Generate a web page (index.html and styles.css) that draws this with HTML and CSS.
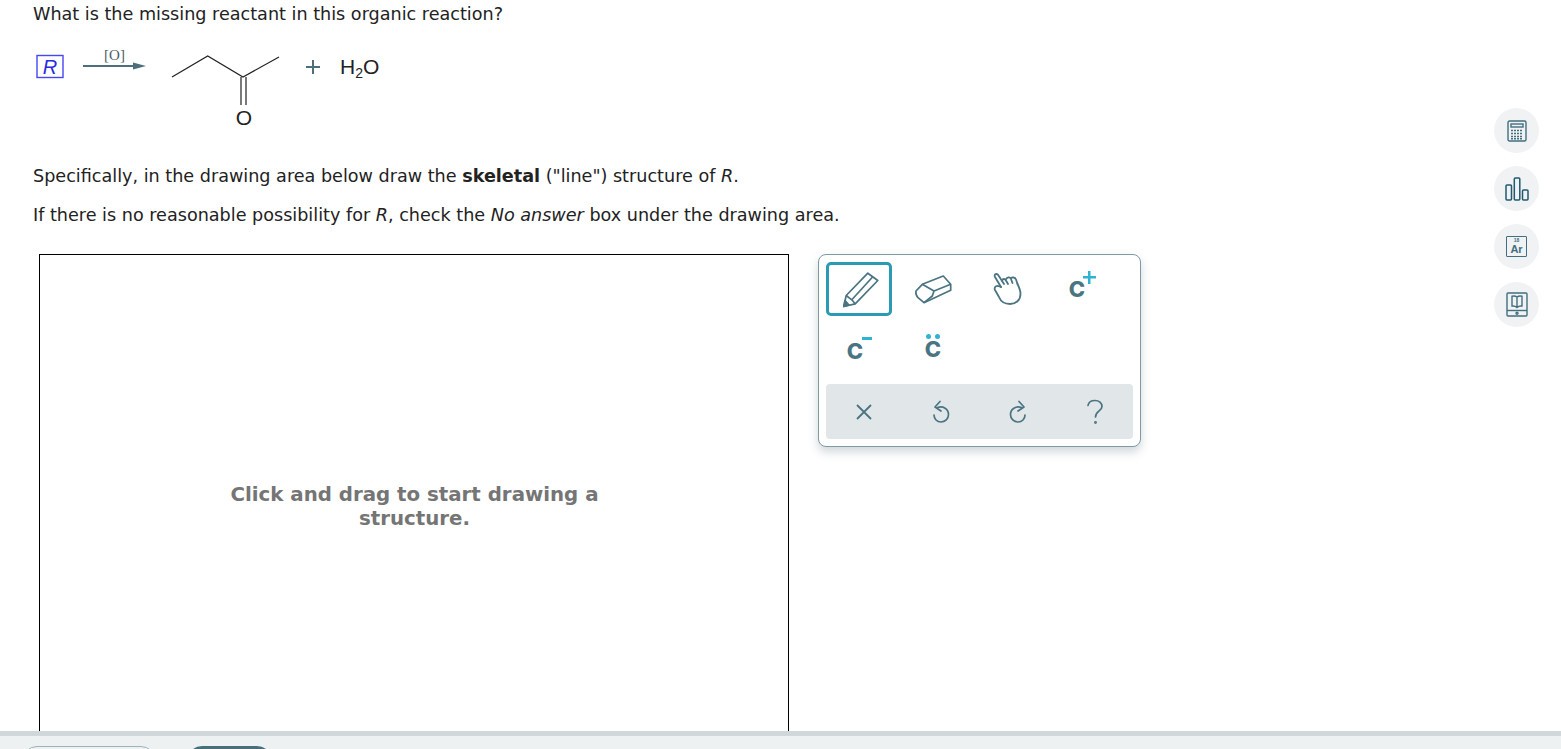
FILE: index.html
```html
<!DOCTYPE html>
<html lang="en">
<head>
  <meta charset="UTF-8">
  <meta name="viewport" content="width=device-width, initial-scale=1.0">
  <title>Organic Reaction Question</title>
  <link rel="stylesheet" href="styles.css">
</head>
<body>
  <div class="main">
    <div class="question">
      <p class="prompt">What is the missing reactant in this organic reaction?</p>

      <svg class="reaction" width="400" height="100" viewBox="0 0 400 100">
        <rect x="4" y="12.500" width="26" height="22" fill="none" stroke="#4646f5" stroke-width="1.400"/>
        <text x="17" y="31" class="r-label" text-anchor="middle">R</text>
        <text x="81.500" y="17" class="oxidant" text-anchor="middle">[O]</text>
        <path d="M50 23H104" stroke="#4d6f7c" stroke-width="2" fill="none"/>
        <path d="M100 19.500L113 23L100 26.500Z" fill="#4d6f7c"/>
        <path d="M139 34L174.700 13L210 34L246 14" stroke="#222" stroke-width="1.200" fill="none"/>
        <path d="M208 34V62M213 34V62" stroke="#222" stroke-width="1.200" fill="none"/>
        <text x="211" y="82" class="atom" text-anchor="middle">O</text>
        <path d="M273 24H287M280 17V31" stroke="#4d6f7c" stroke-width="2" fill="none"/>
        <text x="307" y="31" class="atom">H<tspan class="sub" dy="4">2</tspan><tspan dy="-4">O</tspan></text>
      </svg>

      <p class="instruction first">Specifically, in the drawing area below draw the <b>skeletal</b> ("line") structure of <i>R</i>.</p>
      <p class="instruction">If there is no reasonable possibility for <i>R</i>, check the <i>No answer</i> box under the drawing area.</p>

      <div class="workspace">
        <div class="canvas">
          <p class="canvas-hint">Click and drag to start drawing a structure.</p>
        </div>

        <div class="toolbox">
          <div class="tools">
            <button class="tool selected">
              <svg width="40" height="40" viewBox="0 0 40 40" fill="none" stroke="#4a7482" stroke-width="1.700" stroke-linejoin="round">
                <path d="M4.800 37.500L7.200 26.500L28.800 4.200L38.800 11.500L16.200 34.800Z"/>
                <path d="M7.200 26.500L12.800 30.800L16.200 34.800M12.800 30.800L33.800 7.800"/>
                <path d="M4.800 37.500L6 31.500L10 36Z" fill="#4a7482"/>
              </svg>
            </button>
            <button class="tool">
              <svg width="40" height="32" viewBox="0 0 40 32" fill="none" stroke="#4a7482" stroke-width="1.700" stroke-linejoin="round">
                <path d="M3 18L9.300 11.300L30.300 3L37.700 11.300V17.300L11 29.700L5 24.700C3.500 23 2.500 20 3 18Z"/>
                <path d="M9.300 11.300L21 18L37.700 11.300M21 18L19.300 23L11 29.700"/>
              </svg>
            </button>
            <button class="tool">
              <svg width="30" height="32" viewBox="0 0 30 32" fill="none" stroke="#4a7482" stroke-width="1.800" stroke-linecap="round" stroke-linejoin="round">
                <path d="M9 14L3 4C1.500 1 5 0 6.500 2.500L12 11"/>
                <path d="M10 7.500C11 5.500 13 5.500 14 7.500L16 11M14 6.500C15 4 18 3.500 19 6L20.500 10M19 5.500C20 4 23 4 24 6.500L25.500 11"/>
                <path d="M9 14L6 13C3.500 12.500 2 15 3 17L7 24C9 29 13 31 18 31C24 31 28.500 27 28.500 21C28.500 17 27 14 25.500 11"/>
              </svg>
            </button>
            <button class="tool charge charge-plus">
              <span class="carbon">C</span><span class="mark plus"></span>
            </button>
            <button class="tool charge charge-minus">
              <span class="carbon">C</span><span class="mark minus"></span>
            </button>
            <button class="tool charge charge-dots">
              <span class="carbon">C</span><span class="mark dots"><i></i><i></i></span>
            </button>
          </div>

          <div class="actions">
            <button class="action">
              <svg width="18" height="18" viewBox="0 0 18 18" fill="none" stroke="#4a7482" stroke-width="1.800">
                <path d="M2 2L16 16M16 2L2 16"/>
              </svg>
            </button>
            <button class="action">
              <svg width="18" height="24" viewBox="0 0 18 24" fill="none" stroke="#4a7482" stroke-width="1.700" stroke-linecap="round" stroke-linejoin="round">
                <path d="M5.500 7.500C11 5.500 16.500 9 16.500 14.500C16.500 19 13 22 9 22C5 22 2 19 2 15"/>
                <path d="M8 1.500L3 7L9 11"/>
              </svg>
            </button>
            <button class="action">
              <svg width="18" height="24" viewBox="0 0 18 24" fill="none" stroke="#4a7482" stroke-width="1.700" stroke-linecap="round" stroke-linejoin="round">
                <path d="M12.500 7.500C7 5.500 1.500 9 1.500 14.500C1.500 19 5 22 9 22C13 22 16 19 16 15"/>
                <path d="M10 1.500L15 7L9 11"/>
              </svg>
            </button>
            <button class="action">
              <svg width="18" height="26" viewBox="0 0 18 26" fill="none" stroke="#4a7482" stroke-width="1.700" stroke-linecap="round">
                <path d="M2 6.500C2.500 3 5.500 1.500 9 1.500C13 1.500 16 4 16 7.500C16 12 9.500 12 9.500 18"/>
                <circle cx="9.500" cy="23.500" r="0.600"/>
              </svg>
            </button>
          </div>
        </div>
      </div>
    </div>

    <div class="rail">
      <button class="rail-btn">
        <svg width="20" height="22" viewBox="0 0 20 22" fill="none" stroke="#426f7f" stroke-width="1.400">
          <rect x="1" y="1" width="18" height="20" rx="1.500"/>
          <rect x="4" y="4" width="12" height="3"/>
          <path d="M4 10.500H16M4 13.500H16M4 16.500H16M4 18.800H16" stroke-width="1.500" stroke-dasharray="2 1"/>
        </svg>
      </button>
      <button class="rail-btn">
        <svg width="24" height="24" viewBox="0 0 24 24" fill="none" stroke="#1f5a6e" stroke-width="1.500">
          <rect x="1" y="8" width="5.500" height="15" rx="1"/>
          <rect x="9.300" y="1" width="5.500" height="22" rx="1"/>
          <rect x="17.500" y="13" width="5.500" height="10" rx="1"/>
        </svg>
      </button>
      <button class="rail-btn">
        <span class="element"><small>18</small>Ar</span>
      </button>
      <button class="rail-btn">
        <svg width="22" height="25" viewBox="0 0 22 25" fill="none" stroke="#426f7f" stroke-width="1.400">
          <rect x="1" y="1" width="20" height="23" rx="1"/>
          <path d="M1 18.500H21"/>
          <path d="M11 5C9.500 3.800 8 3.800 6 4.200V14C8 13.800 9.500 14 11 15.500C12.500 14 14 13.800 16 14V4.200C14 3.800 12.500 3.800 11 5ZM11 5V15.500"/>
          <circle cx="11" cy="21.200" r="1"/>
        </svg>
      </button>
    </div>
  </div>

  <div class="footer">
    <button class="foot-btn outline"></button>
    <button class="foot-btn solid"></button>
  </div>
</body>
</html>
```

FILE: styles.css
```css
html, body { margin: 0; height: 100%; }
body { height: 749px; overflow: hidden; display: flex; flex-direction: column; background: #fff; font-family: "DejaVu Sans", Verdana, sans-serif; font-size: 17.6px; color: #222; }
p { margin: 0; }
button { padding: 0; border: none; background: none; font: inherit; }

.main { flex: 1; min-height: 0; display: flex; justify-content: space-between; overflow: hidden; }
.question { padding: 4px 0 0 33px; }
.prompt { line-height: 20px; white-space: nowrap; }

.reaction { display: block; margin: 19px 0 0 0; }
.reaction text { font-family: "Liberation Sans", Arial, sans-serif; }
.reaction .r-label { font-size: 20px; font-style: italic; fill: #2a2ae0; }
.reaction .oxidant { font-family: "Liberation Serif", serif; font-size: 15px; fill: #4d5d64; }
.reaction .atom { font-size: 21px; fill: #222; }
.reaction .sub { font-size: 14px; }

.instruction { line-height: 20px; margin-top: 19px; white-space: nowrap; }
.instruction.first { margin-top: 23px; }

.workspace { display: flex; align-items: flex-start; gap: 29px; margin: 29px 0 0 6px; }
.canvas { width: 748px; height: 504px; flex: none; border: 1px solid #000; display: flex; align-items: center; justify-content: center; }
.canvas-hint { width: 400px; margin-left: 1px; text-align: center; font-size: 19.8px; line-height: 24px; font-weight: bold; color: #757575; }

.toolbox { width: 307px; padding: 7px; border: 1px solid #7f9aa3; border-radius: 8px; background: #fff; box-shadow: 0 5px 10px rgba(70, 100, 110, 0.25); }
.tools { display: grid; grid-template-columns: repeat(4, 66px); column-gap: 8px; row-gap: 4px; }
.tool { height: 54px; display: flex; align-items: center; justify-content: center; border: 3px solid transparent; border-radius: 5px; box-sizing: border-box; }
.tool.selected { border-color: #2b9bb5; }

.charge { position: relative; }
.charge-plus { padding-right: 8px; }
.charge-minus { padding: 8px 8px 0 0; }
.charge-dots { padding-top: 4px; }
.carbon { font-family: Inter, sans-serif; font-size: 22px; font-weight: 800; color: #4a7482; line-height: 1; }
.mark { position: absolute; }
.mark.plus { left: 32px; top: 6px; width: 13px; height: 13px; background: linear-gradient(#2fb3d1, #2fb3d1) center / 13px 2.500px no-repeat, linear-gradient(#2fb3d1, #2fb3d1) center / 2.500px 13px no-repeat; }
.mark.minus { left: 33px; top: 14px; width: 10px; height: 3px; background: #2fb3d1; }
.mark.dots { left: 23px; top: 11px; display: flex; gap: 4px; }
.mark.dots i { width: 5px; height: 5px; border-radius: 50%; background: #2fb3d1; }

.actions { display: grid; grid-template-columns: repeat(4, 1fr); height: 55px; margin-top: 10px; border-radius: 4px; background: #e1e6e9; }
.action { display: flex; align-items: center; justify-content: center; }

.rail { display: flex; flex-direction: column; gap: 13px; padding: 108px 22px 0 0; }
.rail-btn { width: 45px; height: 45px; border-radius: 50%; background: #f0f2f4; display: flex; align-items: center; justify-content: center; }
.element { width: 19px; height: 19px; border: 1.400px solid #426f7f; border-radius: 1px; display: flex; flex-direction: column; align-items: center; font-family: "Liberation Sans", sans-serif; font-size: 11px; font-weight: bold; line-height: 10px; color: #426f7f; }
.element small { font-size: 5px; line-height: 7px; }

.footer { flex: none; display: flex; gap: 31px; height: 3px; padding: 10px 0 0 22px; border-top: 5px solid #d0d8db; background: #edf1f2; overflow: hidden; }
.foot-btn { height: 30px; border-radius: 16px; flex: none; box-sizing: border-box; }
.foot-btn.outline { border: 1px solid #9fb4ba; width: 134px; }
.foot-btn.solid { width: 85px; background: #4a6f7c; }
```
